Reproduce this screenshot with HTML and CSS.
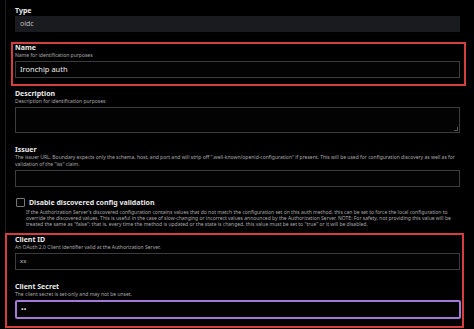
FILE: index.html
```html
<!DOCTYPE html>
<html>
<head>
<meta charset="utf-8">
<link rel="stylesheet" href="styles.css">
</head>
<body>
<div class="page">
  <div class="field">
    <div class="label">Type</div>
    <div class="input readonly">oidc</div>
  </div>

  <div class="hl hl-name">
    <div class="label">Name</div>
    <div class="desc">Name for identification purposes</div>
    <div class="input name-input">Ironchip auth</div>
  </div>

  <div class="field f-desc">
    <div class="label">Description</div>
    <div class="desc">Description for identification purposes</div>
    <div class="input textarea"><span class="grip"></span></div>
  </div>

  <div class="field f-issuer">
    <div class="label">Issuer</div>
    <div class="desc">The issuer URL. Boundary expects only the schema, host, and port and will strip off ".well-known/openid-configuration" if present. This will be used for configuration discovery as well as for<br>validation of the "iss" claim.</div>
    <div class="input"></div>
  </div>

  <div class="check">
    <div class="check-row">
      <span class="box"></span>
      <span class="check-label">Disable discovered config validation</span>
    </div>
    <div class="desc check-desc">If the Authorization Server's discovered configuration contains values that do not match the configuration set on this auth method, this can be set to force the local configuration to<br>override the discovered values. This is useful in the case of slow-changing or incorrect values announced by the Authorization Server. NOTE: For safety, not providing this value will be<br>treated the same as "false"; that is, every time the method is updated or the state is changed, this value must be set to "true" or it will be disabled.</div>
  </div>

  <div class="hl hl-client">
    <div class="label">Client ID</div>
    <div class="desc">An OAuth 2.0 Client identifier valid at the Authorization Server.</div>
    <div class="input small">xx</div>
    <div class="label l-secret">Client Secret</div>
    <div class="desc">The client secret is set-only and may not be unset.</div>
    <div class="input focus">••</div>
  </div>
</div>
</body>
</html>
```

FILE: styles.css
```css
html, body {
  margin: 0;
  padding: 0;
  background: #000;
  width: 474px;
  height: 329px;
  overflow: hidden;
}
body {
  font-family: "Noto Sans", "Open Sans", sans-serif;
  color: #e6e6e6;
}
.page {
  margin-left: 5px;
  border-left: 1px solid #1c1c1c;
  padding: 7px 14px 0 9px;
  height: 329px;
  box-sizing: border-box;
}
.label {
  font-size: 7px;
  font-weight: 700;
  line-height: 8px;
  color: #ececec;
}
.desc {
  font-size: 5px;
  line-height: 7px;
  color: #a9a9a9;
  white-space: nowrap;
}
.input {
  box-sizing: border-box;
  height: 17px;
  border: 1px solid #3c3c3c;
  background: #030303;
  font-size: 7px;
  line-height: 15px;
  padding-left: 4px;
  color: #ededed;
  margin-top: 2px;
}
.input.name-input {
  font-size: 7.5px;
}
.input.readonly {
  border: none;
  background: #1a1b1f;
  color: #bdbdbd;
  height: 16px;
  line-height: 16px;
  font-size: 7px;
  padding-left: 5px;
  margin-top: 1px;
}
.hl {
  border: 2px solid #d43f3d;
}
.hl-name {
  margin: 10px -6px 0 -4px;
  padding: 0 4px 6px 2px;
}
.f-desc { margin-top: 4px; }
.textarea {
  height: 26px;
  position: relative;
}
.grip {
  position: absolute;
  right: 1px;
  bottom: 1px;
  width: 3px;
  height: 3px;
  border-right: 1px solid #555;
  border-bottom: 1px solid #555;
}
.f-issuer { margin-top: 13px; }
.check { margin-top: 11px; }
.check-row {
  display: flex;
  align-items: center;
  gap: 4px;
}
.box {
  width: 7px;
  height: 7px;
  border: 1px solid #777;
  border-radius: 1px;
  margin-left: 1px;
}
.check-label {
  font-size: 7px;
  font-weight: 700;
  line-height: 9px;
  color: #e8e8e8;
}
.check-desc {
  padding-left: 11px;
  line-height: 6px;
  margin-top: 2px;
}
.hl-client {
  margin: 6px -4px 0 -10px;
  padding: 1px 2px 7px 8px;
}
.input.small {
  font-size: 6px;
  color: #cfcfcf;
}
.l-secret { margin-top: 13px; }
.input.focus {
  border: 2px solid #a27ad6;
  border-radius: 2px;
  height: 19px;
  line-height: 15px;
  font-size: 7px;
  padding-left: 4px;
  margin-right: -1px;
}
```
